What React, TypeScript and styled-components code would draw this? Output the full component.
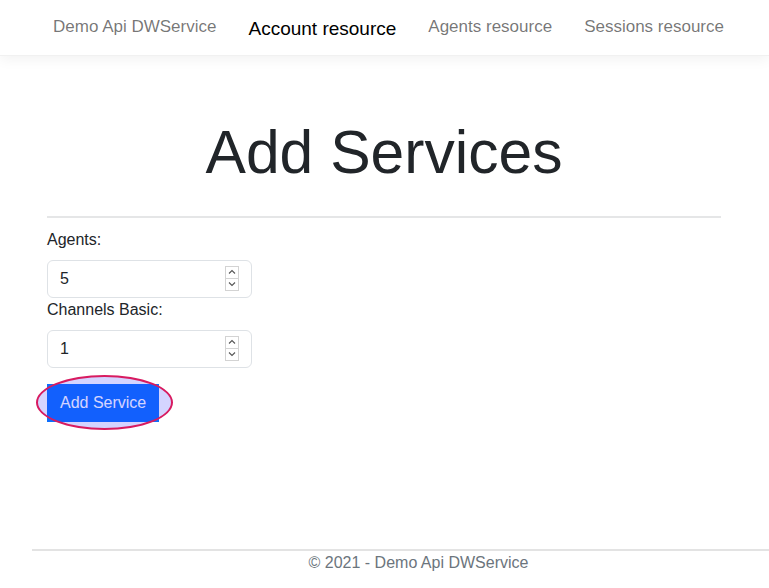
import React from "react";
import styled, { createGlobalStyle } from "styled-components";

const Global = createGlobalStyle`
  html, body { margin: 0; padding: 0; background: #fff; }
  body { font-family: "Liberation Sans", Arial, sans-serif; font-size: 16px; line-height: 1.5; color: #212529; }
  * { box-sizing: border-box; }
`;

const Page = styled.div`
  position: relative;
  width: 769px;
  height: 588px;
  display: flex;
  flex-direction: column;
  overflow: hidden;
`;

const NavBar = styled.header`
  height: 56px;
  display: flex;
  align-items: center;
  justify-content: center;
  padding-left: 8px;
  background: #fff;
  box-shadow: 0 4px 12px rgba(0, 0, 0, 0.05);
  border-bottom: 1px solid #f1f1f1;
`;

const NavItem = styled.a<{ $active?: boolean }>`
  padding: 0 16px;
  font-size: ${(p) => (p.$active ? "19px" : "17px")};
  color: ${(p) => (p.$active ? "#000" : "rgba(0,0,0,0.55)")};
  text-decoration: none;
  line-height: 1;
  white-space: nowrap;
  margin-top: ${(p) => (p.$active ? "2px" : "-2px")};
`;

const Main = styled.main`
  width: 674px;
  margin: 0 0 0 47px;
  flex: 1;
`;

const Title = styled.h1`
  margin: 60px 0 0;
  font-size: 60.6px;
  font-weight: 300;
  line-height: 1.2;
  text-align: center;
  color: #212529;
`;

const Rule = styled.hr`
  margin: 27px 0 10px;
  border: 0;
  border-top: 2px solid #e5e6e7;
`;

const Label = styled.label`
  display: block;
  margin-bottom: 8px;
  font-size: 16px;
  line-height: 24px;
`;

const Field = styled.div`
  position: relative;
  width: 205px;
  height: 38px;
  border: 1px solid #dee2e6;
  border-radius: 6px;
  display: flex;
  align-items: center;
  padding: 0 12px;
  font-size: 16px;
  color: #212529;
`;

const Spinner = styled.div`
  position: absolute;
  right: 12px;
  top: 5px;
  width: 14px;
  display: flex;
  flex-direction: column;
`;

const SpinBtn = styled.div`
  height: 13px;
  border: 1px solid #d3d3d3;
  background: #fff;
  display: flex;
  align-items: center;
  justify-content: center;
  & + & { border-top: 1px solid #d3d3d3; margin-top: -1px; }
`;

const ButtonWrap = styled.div`
  position: relative;
  margin-top: 16px;
  width: 112px;
`;

const Button = styled.button`
  height: 38px;
  width: 112px;
  padding: 0 12px;
  border: 1px solid #0d6efd;
  border-radius: 0;
  background: #0d6efd;
  color: #fff;
  white-space: nowrap;
  font-family: "Liberation Sans", Arial, sans-serif;
  font-size: 16px;
`;

const Highlight = styled.div`
  position: absolute;
  left: -11px;
  top: -9px;
  width: 137px;
  height: 55px;
  border: 2px solid #d81b60;
  border-radius: 50%;
  background: rgba(40, 40, 255, 0.2);
  pointer-events: none;
`;

const Footer = styled.footer`
  margin: 0 0 0 32px;
  height: 39px;
  border-top: 2px solid #e3e3e3;
  padding-left: 36px;
  text-align: center;
  color: #6c757d;
  font-size: 16px;
  line-height: 24px;
`;

const Chevron = ({ up }: { up?: boolean }) => (
  <svg width="8" height="6" viewBox="0 0 8 6">
    <path
      d={up ? "M1 4.5 L4 1.5 L7 4.5" : "M1 1.5 L4 4.5 L7 1.5"}
      fill="none"
      stroke="#555"
      strokeWidth="1.1"
    />
  </svg>
);

const NumberField = ({ value }: { value: string }) => (
  <Field>
    {value}
    <Spinner>
      <SpinBtn>
        <Chevron up />
      </SpinBtn>
      <SpinBtn>
        <Chevron />
      </SpinBtn>
    </Spinner>
  </Field>
);

export default function App() {
  return (
    <Page>
      <Global />
      <NavBar>
        <NavItem>Demo Api DWService</NavItem>
        <NavItem $active>Account resource</NavItem>
        <NavItem>Agents resource</NavItem>
        <NavItem>Sessions resource</NavItem>
      </NavBar>
      <Main>
        <Title>Add Services</Title>
        <Rule />
        <Label>Agents:</Label>
        <NumberField value="5" />
        <Label>Channels Basic:</Label>
        <NumberField value="1" />
        <ButtonWrap>
          <Button>Add Service</Button>
          <Highlight />
        </ButtonWrap>
      </Main>
      <Footer>© 2021 - Demo Api DWService</Footer>
    </Page>
  );
}
